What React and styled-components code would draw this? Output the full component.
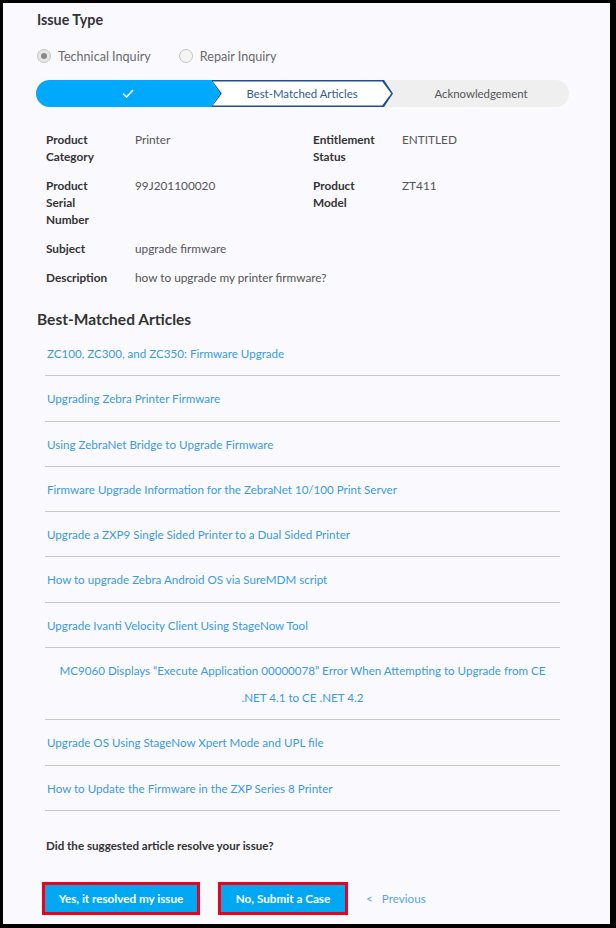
import React from "react";
import styled, { createGlobalStyle } from "styled-components";

const GlobalStyle = createGlobalStyle`
  body {
    margin: 0;
    font-family: Lato, "Liberation Sans", sans-serif;
  }
`;

const Frame = styled.div`
  box-sizing: border-box;
  width: 616px;
  height: 928px;
  border-style: solid;
  border-color: #000;
  border-width: 3px 6px 4px 3px;
  background: #f9f9fe;
  padding: 7px 0 0 34px;
  overflow: hidden;
`;

const Title = styled.h2`
  margin: 0;
  font-size: 14.3px;
  line-height: 20px;
  font-weight: 700;
  color: #333;
`;

const RadioRow = styled.div`
  display: flex;
  align-items: center;
  gap: 28px;
  margin-top: 18px;
  height: 16px;
`;

const RadioLabel = styled.label`
  display: flex;
  align-items: center;
  gap: 7px;
  font-size: 12.6px;
  color: #6a6a6a;
`;

const RadioDot = styled.span`
  box-sizing: border-box;
  width: 14px;
  height: 14px;
  border-radius: 50%;
  border: 1px solid #c4c4c4;
  background: ${(p) => (p.$checked ? "#e6e6e6" : "#f4f4f4")};
  display: flex;
  align-items: center;
  justify-content: center;

  &::after {
    content: "";
    display: ${(p) => (p.$checked ? "block" : "none")};
    width: 6px;
    height: 6px;
    border-radius: 50%;
    background: #8a8a8a;
  }
`;

const Stepper = styled.div`
  display: flex;
  height: 27px;
  margin: 16px 0 0 -1px;
  font-size: 11.4px;
`;

const Step = styled.div`
  display: flex;
  align-items: center;
  justify-content: center;
  flex: none;
  width: ${(p) => p.$w}px;
  margin-left: ${(p) => (p.$first ? 0 : -9)}px;
  z-index: ${(p) => p.$z};
  background: ${(p) => p.$bg};
  color: ${(p) => p.$color};
  border-radius: ${(p) => p.$radius};
  clip-path: ${(p) => p.$clip};
  padding-left: ${(p) => p.$pl || 0}px;
  box-sizing: border-box;
`;

const StepInner = styled.div`
  flex: 1;
  align-self: stretch;
  display: flex;
  align-items: center;
  justify-content: center;
  background: #fff;
  color: #33598f;
  clip-path: polygon(
    1.8px 1.5px,
    calc(100% - 10.8px) 1.5px,
    calc(100% - 1.8px) 50%,
    calc(100% - 10.8px) calc(100% - 1.5px),
    1.8px calc(100% - 1.5px),
    10.8px 50%
  );
`;

const Details = styled.div`
  display: grid;
  grid-template-columns: 89px 178px 89px 1fr;
  row-gap: 12px;
  margin: 24px 0 0 9px;
  font-size: 11.8px;
  line-height: 17px;
`;

const Label = styled.div`
  font-weight: 700;
  color: #333;
  max-width: 72px;
`;

const Value = styled.div`
  color: #555;
  grid-column: ${(p) => (p.$wide ? "2 / 5" : "auto")};
`;

const SectionTitle = styled.h3`
  margin: 23px 0 0;
  font-size: 15.5px;
  line-height: 20px;
  font-weight: 700;
  color: #333;
`;

const ArticleList = styled.ul`
  list-style: none;
  margin: 2px 0 0 8px;
  padding: 0;
  width: 515px;
`;

const Article = styled.li`
  padding: 9px 2px 8.3px;
  border-bottom: 1px solid #c9c9c9;
  font-size: 11.6px;
  line-height: 27px;
  text-align: ${(p) => (p.$center ? "center" : "left")};

  a {
    color: #3b9be0;
    text-decoration: none;
  }
`;

const Question = styled.p`
  margin: 26px 0 0 9px;
  font-size: 11.6px;
  line-height: 17px;
  font-weight: 700;
  color: #333;
`;

const Actions = styled.div`
  display: flex;
  align-items: center;
  gap: 18px;
  margin: 28px 0 0 5px;
`;

const Highlight = styled.div`
  border: 3px solid #f0001c;
  display: flex;
`;

const Button = styled.button`
  height: 27px;
  width: ${(p) => p.$w}px;
  border: none;
  background: #00a8f3;
  color: #fff;
  font-family: inherit;
  font-size: 11.7px;
  font-weight: 700;
  cursor: pointer;
`;

const Previous = styled.a`
  display: flex;
  gap: 9px;
  font-size: 11.7px;
  color: #5aa5e6;
  text-decoration: none;
`;

const articles = [
  "ZC100, ZC300, and ZC350: Firmware Upgrade",
  "Upgrading Zebra Printer Firmware",
  "Using ZebraNet Bridge to Upgrade Firmware",
  "Firmware Upgrade Information for the ZebraNet 10/100 Print Server",
  "Upgrade a ZXP9 Single Sided Printer to a Dual Sided Printer",
  "How to upgrade Zebra Android OS via SureMDM script",
  "Upgrade Ivanti Velocity Client Using StageNow Tool",
  "MC9060 Displays \u201cExecute Application 00000078\u201d Error When Attempting to Upgrade from CE .NET 4.1 to CE .NET 4.2",
  "Upgrade OS Using StageNow Xpert Mode and UPL file",
  "How to Update the Firmware in the ZXP Series 8 Printer",
];

const Check = () => (
  <svg width="12" height="9" viewBox="0 0 12 9">
    <polyline points="1,4.5 4.5,8 11,1" fill="none" stroke="#fff" strokeWidth="1.6" />
  </svg>
);

export default function App() {
  return (
    <>
      <GlobalStyle />
      <Frame>
        <Title>Issue Type</Title>
        <RadioRow>
          <RadioLabel>
            <RadioDot $checked />
            Technical Inquiry
          </RadioLabel>
          <RadioLabel>
            <RadioDot />
            Repair Inquiry
          </RadioLabel>
        </RadioRow>

        <Stepper>
          <Step
            $first
            $w={184}
            $z={3}
            $bg="#00a9fc"
            $radius="13.5px 0 0 13.5px"
            $clip="polygon(0 0, calc(100% - 9px) 0, 100% 50%, calc(100% - 9px) 100%, 0 100%)"
          >
            <Check />
          </Step>
          <Step
            $w={182}
            $z={2}
            $bg="#1e4d8a"
            $clip="polygon(0 0, calc(100% - 9px) 0, 100% 50%, calc(100% - 9px) 100%, 0 100%, 9px 50%)"
          >
            <StepInner>Best-Matched Articles</StepInner>
          </Step>
          <Step
            $w={185}
            $z={1}
            $bg="#efefef"
            $color="#555"
            $pl={9}
            $radius="0 13.5px 13.5px 0"
            $clip="polygon(0 0, 100% 0, 100% 100%, 0 100%, 9px 50%)"
          >
            Acknowledgement
          </Step>
        </Stepper>

        <Details>
          <Label>Product Category</Label>
          <Value>Printer</Value>
          <Label>Entitlement Status</Label>
          <Value>ENTITLED</Value>
          <Label>Product Serial Number</Label>
          <Value>99J201100020</Value>
          <Label>Product Model</Label>
          <Value>ZT411</Value>
          <Label>Subject</Label>
          <Value $wide>upgrade firmware</Value>
          <Label>Description</Label>
          <Value $wide>how to upgrade my printer firmware?</Value>
        </Details>

        <SectionTitle>Best-Matched Articles</SectionTitle>
        <ArticleList>
          {articles.map((a) => (
            <Article key={a} $center={a.startsWith("MC9060")}>
              <a href="#">{a}</a>
            </Article>
          ))}
        </ArticleList>

        <Question>Did the suggested article resolve your issue?</Question>
        <Actions>
          <Highlight>
            <Button $w={152}>Yes, it resolved my issue</Button>
          </Highlight>
          <Highlight>
            <Button $w={124}>No, Submit a Case</Button>
          </Highlight>
          <Previous href="#">
            <span>&lt;</span>
            <span>Previous</span>
          </Previous>
        </Actions>
      </Frame>
    </>
  );
}
